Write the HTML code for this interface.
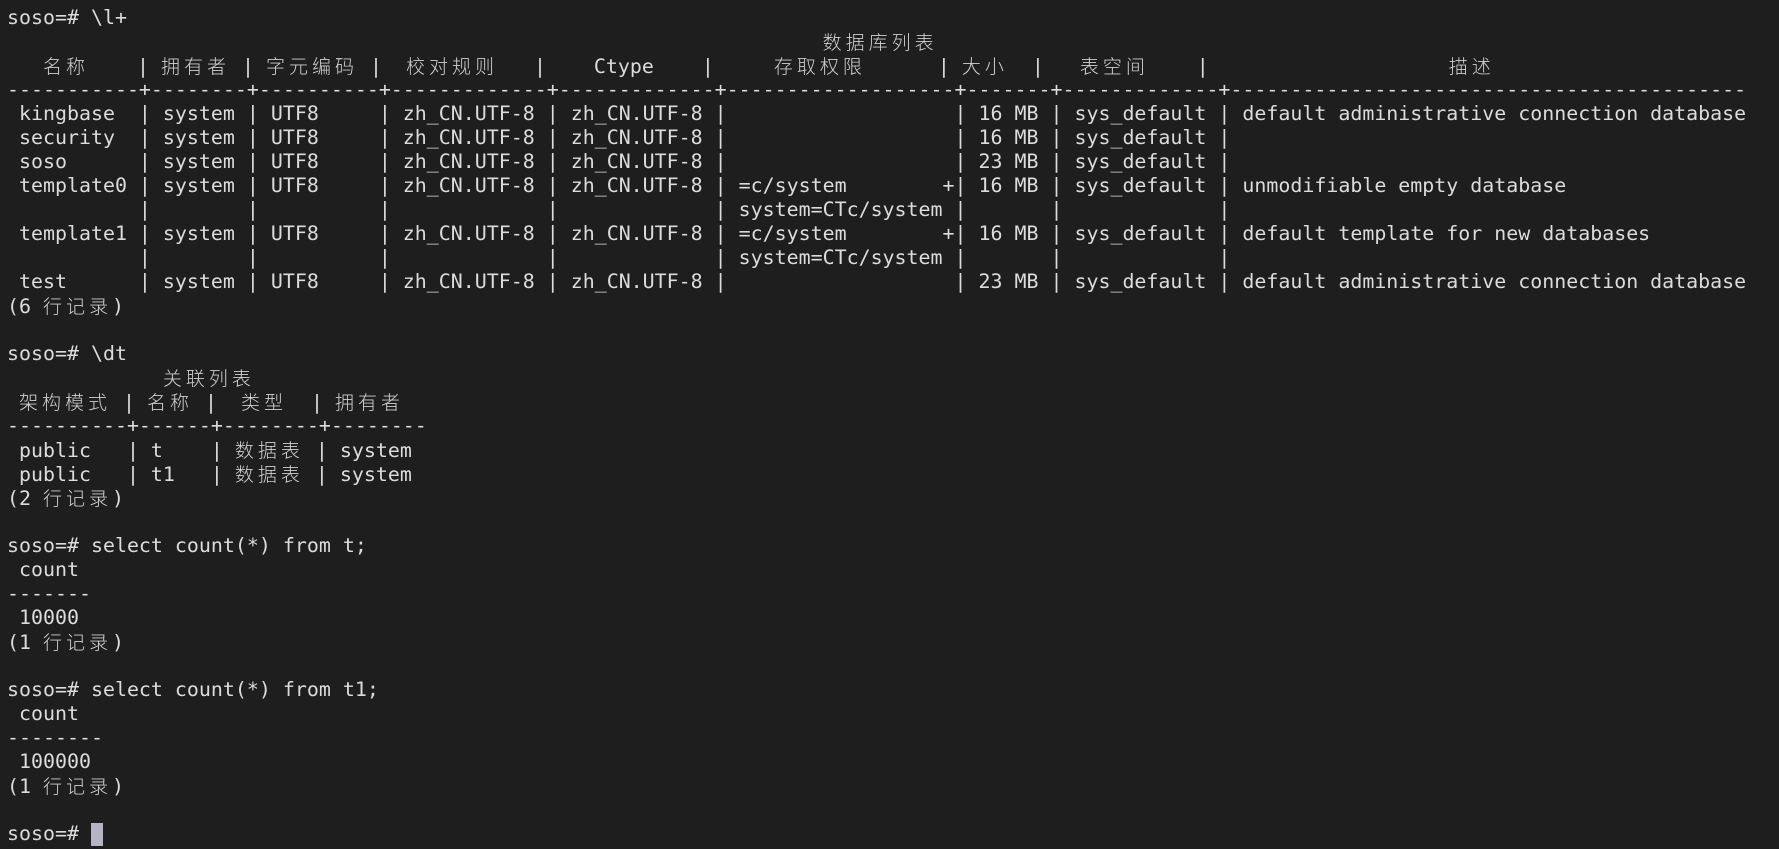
<!DOCTYPE html>
<html><head><meta charset="utf-8"><style>
html,body{margin:0;padding:0;background:#1e1e1e;}
body{width:1779px;height:849px;overflow:hidden;position:relative;}
#t{position:absolute;left:7px;top:6px;color:#dcdcdc;font-family:"DejaVu Sans Mono","Liberation Mono",monospace;font-size:19.93px;}
#t div{height:24px;line-height:24px;white-space:pre;}
.c{font-family:"Noto Sans CJK SC","WenQuanYi Zen Hei",sans-serif;letter-spacing:4px;font-size:19px;color:#d0d0d0;font-weight:300;}
.cur{display:inline-block;width:12px;height:23px;background:#b4b4c4;vertical-align:middle;}
</style></head><body><div id="t">
<div>soso=# \l+</div>
<div>                                                                    <span class="c">数据库列表</span></div>
<div>   <span class="c">名称</span>    | <span class="c">拥有者</span> | <span class="c">字元编码</span> |  <span class="c">校对规则</span>   |    Ctype    |     <span class="c">存取权限</span>      | <span class="c">大小</span>  |   <span class="c">表空间</span>    |                    <span class="c">描述</span></div>
<div>-----------+--------+----------+-------------+-------------+-------------------+-------+-------------+-------------------------------------------</div>
<div> kingbase  | system | UTF8     | zh_CN.UTF-8 | zh_CN.UTF-8 |                   | 16 MB | sys_default | default administrative connection database</div>
<div> security  | system | UTF8     | zh_CN.UTF-8 | zh_CN.UTF-8 |                   | 16 MB | sys_default | </div>
<div> soso      | system | UTF8     | zh_CN.UTF-8 | zh_CN.UTF-8 |                   | 23 MB | sys_default | </div>
<div> template0 | system | UTF8     | zh_CN.UTF-8 | zh_CN.UTF-8 | =c/system        +| 16 MB | sys_default | unmodifiable empty database</div>
<div>           |        |          |             |             | system=CTc/system |       |             | </div>
<div> template1 | system | UTF8     | zh_CN.UTF-8 | zh_CN.UTF-8 | =c/system        +| 16 MB | sys_default | default template for new databases</div>
<div>           |        |          |             |             | system=CTc/system |       |             | </div>
<div> test      | system | UTF8     | zh_CN.UTF-8 | zh_CN.UTF-8 |                   | 23 MB | sys_default | default administrative connection database</div>
<div>(6 <span class="c">行记录</span>)</div>
<div> </div>
<div>soso=# \dt</div>
<div>             <span class="c">关联列表</span></div>
<div> <span class="c">架构模式</span> | <span class="c">名称</span> |  <span class="c">类型</span>  | <span class="c">拥有者</span></div>
<div>----------+------+--------+--------</div>
<div> public   | t    | <span class="c">数据表</span> | system</div>
<div> public   | t1   | <span class="c">数据表</span> | system</div>
<div>(2 <span class="c">行记录</span>)</div>
<div> </div>
<div>soso=# select count(*) from t;</div>
<div> count</div>
<div>-------</div>
<div> 10000</div>
<div>(1 <span class="c">行记录</span>)</div>
<div> </div>
<div>soso=# select count(*) from t1;</div>
<div> count</div>
<div>--------</div>
<div> 100000</div>
<div>(1 <span class="c">行记录</span>)</div>
<div> </div>
<div>soso=# <span class="cur"></span></div>
</div></body></html>
